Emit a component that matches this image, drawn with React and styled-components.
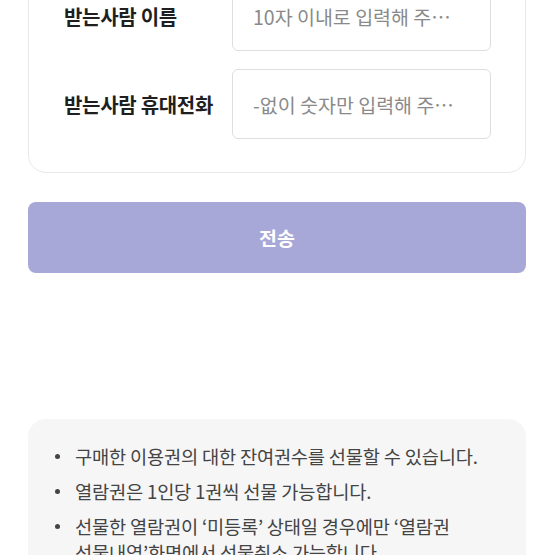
import styled, { createGlobalStyle } from "styled-components";

const GlobalStyle = createGlobalStyle`
  html, body {
    margin: 0;
    padding: 0;
    background: #ffffff;
  }
  body {
    font-family: "Noto Sans CJK KR", "Noto Sans", sans-serif;
    overflow: hidden;
    height: 555px;
  }
`;

const notices = [
  "구매한 이용권의 대한 잔여권수를 선물할 수 있습니다.",
  "열람권은 1인당 1권씩 선물 가능합니다.",
  "선물한 열람권이 ‘미등록’ 상태일 경우에만 ‘열람권 선물내역’화면에서 선물취소 가능합니다.",
];

const App = () => {
  return (
    <Page>
      <GlobalStyle />
      <FormCard>
        <FieldRow>
          <Label>받는사람 이름</Label>
          <TextInput placeholder="10자 이내로 입력해 주세요." />
        </FieldRow>
        <FieldRow>
          <Label>받는사람 휴대전화</Label>
          <TextInput placeholder="-없이 숫자만 입력해 주세요." />
        </FieldRow>
      </FormCard>
      <SubmitButton type="button">전송</SubmitButton>
      <NoticeBox>
        <NoticeList>
          {notices.map((text) => (
            <NoticeItem key={text}>
              <Dot />
              <span>{text}</span>
            </NoticeItem>
          ))}
        </NoticeList>
      </NoticeBox>
    </Page>
  );
};

export default App;

const Page = styled.div`
  width: 555px;
  padding: 0 29px 0 28px;
  box-sizing: border-box;
  display: flex;
  flex-direction: column;
  & > * {
    flex: none;
  }
`;

const FormCard = styled.div`
  margin-top: -50px;
  padding: 30px 34px 33px 35px;
  border: 1px solid #e8e8e8;
  border-radius: 18px;
  background: #ffffff;
  display: flex;
  flex-direction: column;
  gap: 18px;
`;

const FieldRow = styled.div`
  display: grid;
  grid-template-columns: 168px 1fr;
  align-items: center;
`;

const Label = styled.div`
  font-size: 20px;
  font-weight: 700;
  color: #1f1f1f;
  letter-spacing: -0.3px;
  white-space: nowrap;
`;

const TextInput = styled.input`
  height: 70px;
  width: 100%;
  box-sizing: border-box;
  border: 1px solid #dedede;
  border-radius: 6px;
  padding: 0 24px 0 20px;
  font-family: inherit;
  font-size: 19.5px;
  color: #333;
  background: #fff;
  text-overflow: ellipsis;
  outline: none;
  &::placeholder {
    color: #8a8a8a;
  }
`;

const SubmitButton = styled.button`
  margin-top: 29px;
  height: 71px;
  border: none;
  border-radius: 8px;
  background: #a8a8d8;
  color: #ffffff;
  font-family: inherit;
  font-size: 19.5px;
  font-weight: 700;
  cursor: pointer;
`;

const NoticeBox = styled.div`
  margin-top: 146px;
  padding: 24px 28px 30px 27px;
  background: #f6f6f6;
  border-radius: 18px;
`;

const NoticeList = styled.ul`
  list-style: none;
  margin: 0;
  padding: 0;
  display: flex;
  flex-direction: column;
  gap: 9px;
`;

const NoticeItem = styled.li`
  display: flex;
  align-items: flex-start;
  gap: 15px;
  font-size: 18.7px;
  line-height: 26px;
  color: #444444;
  letter-spacing: -0.2px;
  word-break: keep-all;
`;

const Dot = styled.i`
  flex: none;
  width: 5px;
  height: 5px;
  margin-top: 11px;
  border-radius: 50%;
  background: #444444;
`;
